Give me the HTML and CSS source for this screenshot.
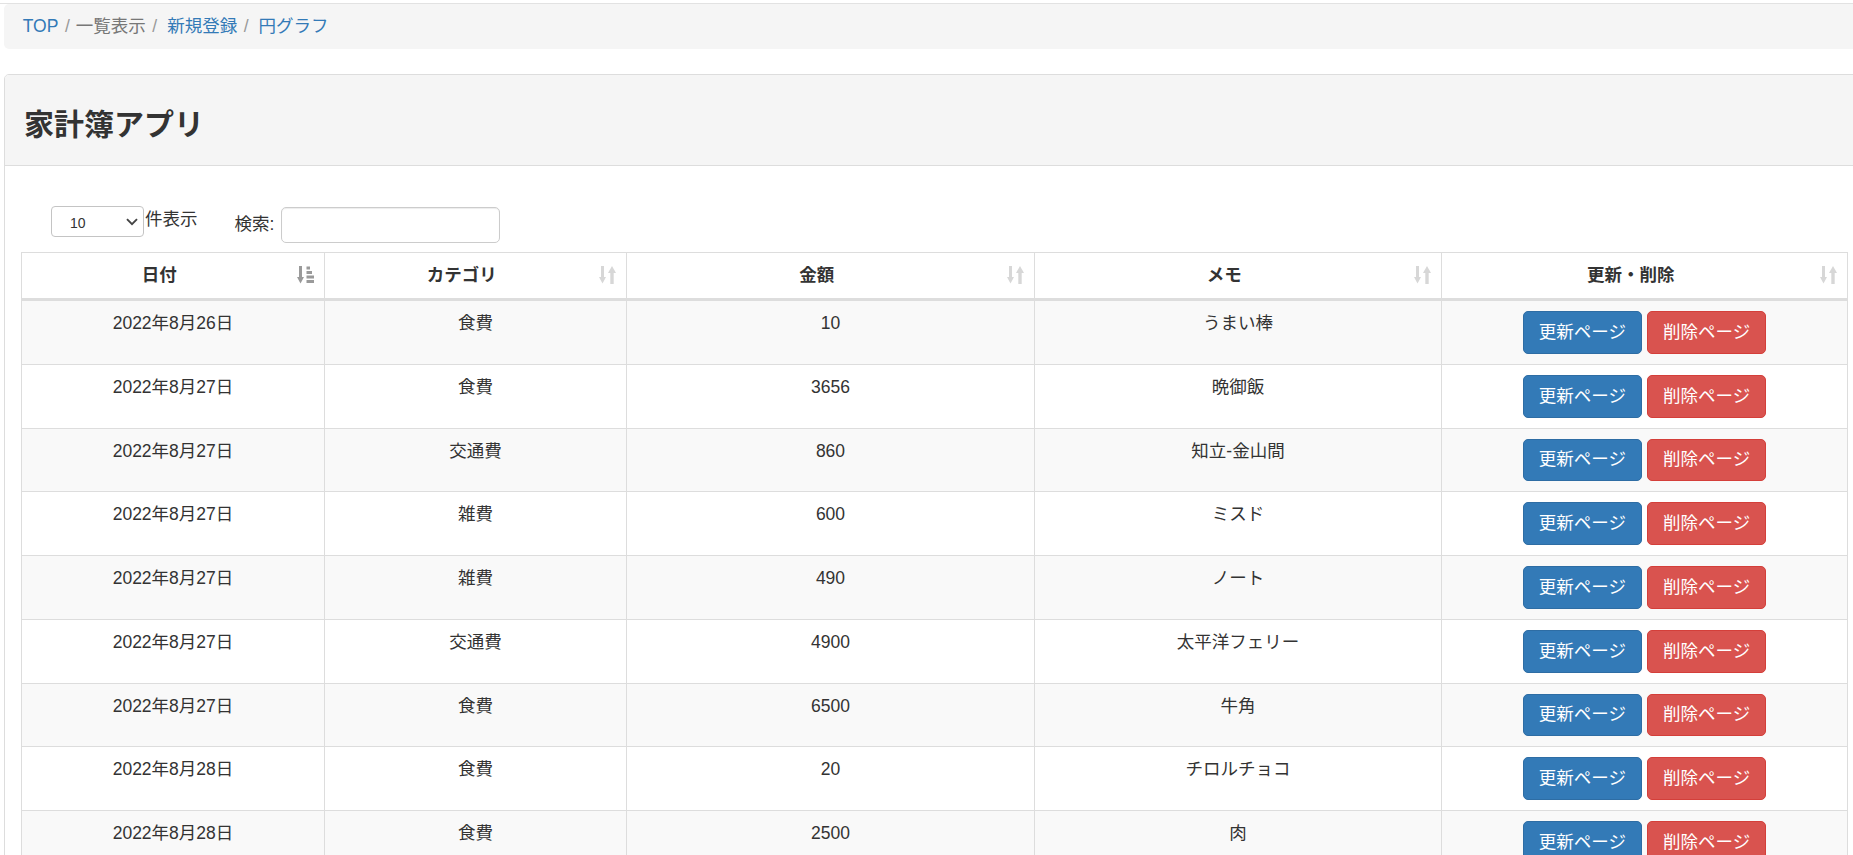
FILE: index.html
```html
<!DOCTYPE html>
<html lang="ja">
<head>
<meta charset="utf-8">
<title>家計簿アプリ</title>
<link rel="stylesheet" href="styles.css">
</head>
<body>
<div class="topline"></div>
<div class="page">
  <ol class="breadcrumb"><li><a href="#">TOP</a></li><li class="active">一覧表示</li><li class="spaced"><a href="#">新規登録</a></li><li class="spaced"><a href="#">円グラフ</a></li></ol>

  <div class="panel">
    <div class="panel-heading">
      <h3 class="panel-title">家計簿アプリ</h3>
    </div>
    <div class="panel-body">
      <div class="dt-controls">
        <div class="dt-length">
          <div class="fake-select">
            <span class="fake-select-value">10</span>
            <svg class="chevron" width="12" height="8" viewBox="0 0 12 8"><path d="M1 1.2 L6 6.2 L11 1.2" fill="none" stroke="#444" stroke-width="1.9"/></svg>
          </div>
          <span class="length-text">件表示</span>
        </div>
        <div class="dt-filter">
          <span class="filter-label">検索:</span>
          <input type="search" class="search-input">
        </div>
      </div>

      <table class="data-table">
        <thead>
          <tr>
            <th class="col-date">日付
              <svg class="sort-icon sorted" width="17" height="18" viewBox="0 0 17 18">
                <rect x="2" y="0" width="3" height="12"/>
                <polygon points="0,11 7,11 3.5,17.5"/>
                <rect x="9.5" y="0.5" width="3.5" height="3"/>
                <rect x="9.5" y="5" width="5.5" height="3"/>
                <rect x="9.5" y="9.5" width="7.5" height="3"/>
                <rect x="9.5" y="14" width="7.5" height="3"/>
              </svg>
            </th>
            <th class="col-cat">カテゴリ
              <svg class="sort-icon" width="17" height="18" viewBox="0 0 17 18">
                <rect x="2" y="0" width="3" height="12"/>
                <polygon points="0,11 7,11 3.5,17.5"/>
                <polygon points="9,7 17,7 13,0"/>
                <rect x="11.3" y="6" width="3.4" height="12"/>
              </svg>
            </th>
            <th class="col-amount">金額
              <svg class="sort-icon" width="17" height="18" viewBox="0 0 17 18">
                <rect x="2" y="0" width="3" height="12"/>
                <polygon points="0,11 7,11 3.5,17.5"/>
                <polygon points="9,7 17,7 13,0"/>
                <rect x="11.3" y="6" width="3.4" height="12"/>
              </svg>
            </th>
            <th class="col-memo">メモ
              <svg class="sort-icon" width="17" height="18" viewBox="0 0 17 18">
                <rect x="2" y="0" width="3" height="12"/>
                <polygon points="0,11 7,11 3.5,17.5"/>
                <polygon points="9,7 17,7 13,0"/>
                <rect x="11.3" y="6" width="3.4" height="12"/>
              </svg>
            </th>
            <th class="col-action">更新・削除
              <svg class="sort-icon" width="17" height="18" viewBox="0 0 17 18">
                <rect x="2" y="0" width="3" height="12"/>
                <polygon points="0,11 7,11 3.5,17.5"/>
                <polygon points="9,7 17,7 13,0"/>
                <rect x="11.3" y="6" width="3.4" height="12"/>
              </svg>
            </th>
          </tr>
        </thead>
        <tbody>
          <tr>
            <td>2022年8月26日</td><td>食費</td><td>10</td><td>うまい棒</td>
            <td><div class="actions"><a class="btn btn-primary" href="#">更新ページ</a><a class="btn btn-danger" href="#">削除ページ</a></div></td>
          </tr>
          <tr>
            <td>2022年8月27日</td><td>食費</td><td>3656</td><td>晩御飯</td>
            <td><div class="actions"><a class="btn btn-primary" href="#">更新ページ</a><a class="btn btn-danger" href="#">削除ページ</a></div></td>
          </tr>
          <tr>
            <td>2022年8月27日</td><td>交通費</td><td>860</td><td>知立-金山間</td>
            <td><div class="actions"><a class="btn btn-primary" href="#">更新ページ</a><a class="btn btn-danger" href="#">削除ページ</a></div></td>
          </tr>
          <tr>
            <td>2022年8月27日</td><td>雑費</td><td>600</td><td>ミスド</td>
            <td><div class="actions"><a class="btn btn-primary" href="#">更新ページ</a><a class="btn btn-danger" href="#">削除ページ</a></div></td>
          </tr>
          <tr>
            <td>2022年8月27日</td><td>雑費</td><td>490</td><td>ノート</td>
            <td><div class="actions"><a class="btn btn-primary" href="#">更新ページ</a><a class="btn btn-danger" href="#">削除ページ</a></div></td>
          </tr>
          <tr>
            <td>2022年8月27日</td><td>交通費</td><td>4900</td><td>太平洋フェリー</td>
            <td><div class="actions"><a class="btn btn-primary" href="#">更新ページ</a><a class="btn btn-danger" href="#">削除ページ</a></div></td>
          </tr>
          <tr>
            <td>2022年8月27日</td><td>食費</td><td>6500</td><td>牛角</td>
            <td><div class="actions"><a class="btn btn-primary" href="#">更新ページ</a><a class="btn btn-danger" href="#">削除ページ</a></div></td>
          </tr>
          <tr>
            <td>2022年8月28日</td><td>食費</td><td>20</td><td>チロルチョコ</td>
            <td><div class="actions"><a class="btn btn-primary" href="#">更新ページ</a><a class="btn btn-danger" href="#">削除ページ</a></div></td>
          </tr>
          <tr>
            <td>2022年8月28日</td><td>食費</td><td>2500</td><td>肉</td>
            <td><div class="actions"><a class="btn btn-primary" href="#">更新ページ</a><a class="btn btn-danger" href="#">削除ページ</a></div></td>
          </tr>
        </tbody>
      </table>
    </div>
  </div>
</div>
</body>
</html>
```

FILE: styles.css
```css
html, body {
  margin: 0;
  padding: 0;
  overflow: hidden;
  background: #fff;
}

body {
  font-family: "Liberation Sans", "Noto Sans CJK JP", sans-serif;
  font-size: 17.5px;
  line-height: 25px;
  color: #333;
}

a {
  color: #337ab7;
  text-decoration: none;
}

.topline {
  height: 3px;
  border-bottom: 1px solid #e2e2e2;
}

.page {
  width: 1860px;
  padding-left: 4px;
}

/* breadcrumb */
.breadcrumb {
  list-style: none;
  margin: 0 0 25px;
  padding: 10px 18.75px;
  background: #f5f5f5;
  border-radius: 5px;
}

.breadcrumb li {
  display: inline;
}

.breadcrumb li + li::before {
  content: "/";
  padding: 0 6px 0 6.5px;
  color: #999;
}

.breadcrumb li.spaced a {
  margin-left: 4px;
}

.breadcrumb .active {
  color: #777;
}

/* panel */
.panel {
  border: 1px solid #ddd;
  border-radius: 5px;
  background: #fff;
}

.panel-heading {
  background: #f5f5f5;
  border-bottom: 1px solid #ddd;
  padding: 33px 19px 24px;
  border-radius: 4px 4px 0 0;
}

.panel-title {
  margin: 0;
  font-size: 30px;
  line-height: 33px;
  font-weight: 700;
  color: #333;
}

.panel-body {
  padding: 40px 16px 16px;
}

/* datatable controls */
.dt-controls {
  display: flex;
  align-items: flex-start;
  padding-left: 30px;
  height: 46px;
}

.dt-length {
  display: flex;
  align-items: flex-start;
}

.fake-select {
  box-sizing: border-box;
  width: 93px;
  height: 31px;
  border: 1px solid #c4c4c4;
  border-radius: 4px;
  background: #fff;
  display: flex;
  align-items: center;
  justify-content: space-between;
  padding: 0 5px 0 18px;
}

.fake-select-value {
  font-size: 14px;
  line-height: 16px;
  color: #333;
  padding-top: 2px;
}

.chevron {
  display: block;
}

.length-text {
  margin-left: 1px;
  margin-top: 1px;
}

.dt-filter {
  display: flex;
  align-items: flex-start;
  margin-left: 37px;
}

.filter-label {
  margin-top: 6px;
}

.search-input {
  box-sizing: border-box;
  width: 219px;
  height: 36px;
  margin: 1px 0 0 7px;
  border: 1px solid #ccc;
  border-radius: 5px;
  box-shadow: inset 0 1px 1px rgba(0, 0, 0, 0.075);
  font: inherit;
  padding: 4px 10px;
}

/* table */
.data-table {
  width: 1826px;
  table-layout: fixed;
  border-collapse: collapse;
  border: 1px solid #ddd;
}

.data-table th,
.data-table td {
  box-sizing: border-box;
  border: 1px solid #ddd;
  padding: 10px;
  line-height: 25px;
  text-align: center;
  vertical-align: top;
}

.data-table th {
  position: relative;
  font-weight: 700;
  padding-right: 37.5px;
  border-bottom: 3px solid #ddd;
}

.col-date { width: 303px; }
.col-cat { width: 302px; }
.col-amount { width: 408px; }
.col-memo { width: 407px; }
.col-action { width: 406px; }

.sort-icon {
  position: absolute;
  right: 10px;
  top: 13px;
  fill: #d7d7d7;
}

.sort-icon.sorted {
  fill: #9a9a9a;
}

.data-table tbody tr:nth-child(odd) {
  background: #f9f9f9;
}

.actions {
  display: flex;
  justify-content: center;
  gap: 5px;
}

.btn {
  display: block;
  padding: 7.875px 15px;
  line-height: 25px;
  font-size: 17.5px;
  border: 1px solid transparent;
  border-radius: 5px;
  color: #fff;
  white-space: nowrap;
}

.btn-primary {
  background: #337ab7;
  border-color: #2e6da4;
}

.btn-danger {
  background: #d9534f;
  border-color: #d43f3a;
}
```
